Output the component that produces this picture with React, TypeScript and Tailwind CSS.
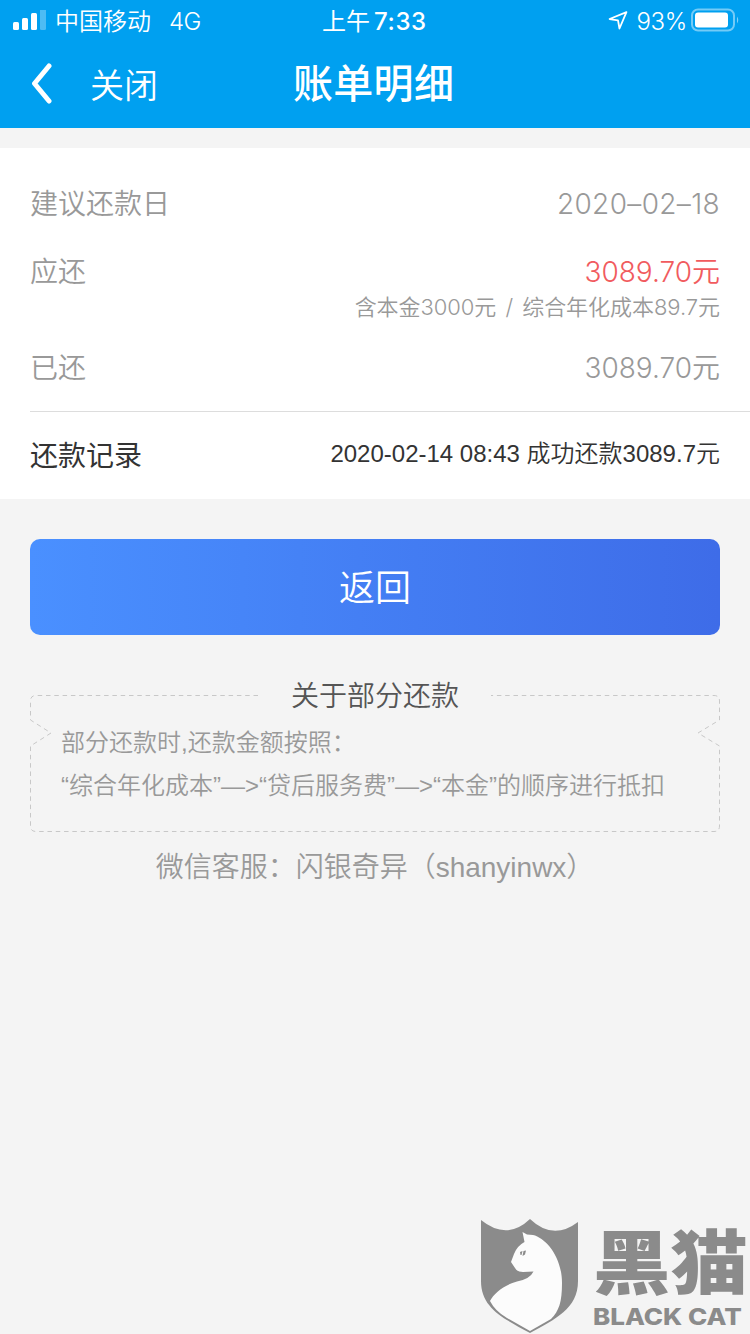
const rowText = "font-['Inter','Noto_Sans_CJK_SC',sans-serif] font-[350] text-[28px] leading-10 text-[#999]"

function StatusBar() {
  return (
    <div className="flex h-10 items-center text-2xl leading-10 font-['Inter','Noto_Sans_CJK_SC',sans-serif]">
      <div className="flex w-[322px] items-center pl-[13px] font-[350]">
        <svg width="34" height="20" viewBox="0 0 34 20" fill="currentColor">
          <rect x="0" y="12" width="6" height="8" rx="1.5" />
          <rect x="9" y="8" width="6" height="12" rx="1.5" />
          <rect x="18" y="3" width="6" height="17" rx="1.5" />
          <rect x="27" y="-1" width="6" height="21" rx="1.5" opacity="0.3" />
        </svg>
        <span className="ml-2 pt-1">中国移动</span>
        <span className="ml-[18px] pt-1 tracking-[-0.5px]">4G</span>
      </div>
      <div className="pt-1 font-medium">
        <span className="font-normal">上午</span>
        <span className="ml-1 tracking-[0.6px]">7:33</span>
      </div>
      <div className="flex flex-1 items-center justify-end pr-[10px] font-[350]">
        <svg width="20" height="19" viewBox="0 0 18 18" fill="none" stroke="currentColor" strokeWidth="1.7" strokeLinejoin="round">
          <path d="M17 1 L1 7.6 L9 8.8 L10.4 16.6 Z" />
        </svg>
        <span className="ml-2 pt-1 tracking-[-0.3px]">93%</span>
        <svg className="ml-1" width="49" height="24" viewBox="0 0 49 24">
          <rect x="1" y="1.5" width="42" height="21" rx="6" fill="none" stroke="currentColor" strokeWidth="2" opacity="0.45" />
          <rect x="4" y="4.5" width="33" height="15" rx="3" fill="currentColor" />
          <path d="M46 8.5 Q48.5 12 46 15.5 Z" fill="currentColor" opacity="0.5" />
        </svg>
      </div>
    </div>
  )
}

function NavBar() {
  return (
    <div className="flex h-[88px] items-center">
      <div className="flex w-[293px] items-center pl-[30px]">
        <svg width="24" height="42" viewBox="0 0 24 42" fill="none" stroke="currentColor" strokeWidth="5" strokeLinecap="round" strokeLinejoin="round">
          <path d="M19 3 L4.5 20.5 L19 38" />
        </svg>
        <span className="ml-9 pt-1 text-[34px] leading-[48px] font-[350]">关闭</span>
      </div>
      <h1 className="text-[40px] leading-[56px] font-medium tracking-[0.3px]">账单明细</h1>
    </div>
  )
}

function BillCard() {
  return (
    <section className="h-[351px] bg-white pl-[30px]">
      <div className={`flex justify-between pt-9 pr-[30px] ${rowText}`}>
        <span>建议还款日</span>
        <span className="tracking-[0.35px]">2020–02–18</span>
      </div>
      <div className={`flex justify-between pt-7 pr-[30px] ${rowText}`}>
        <span>应还</span>
        <div className="text-right">
          <div className="text-[#f15b5e]">3089.70元</div>
          <div className="text-[22px] leading-[30px] tracking-[-0.05px] [word-spacing:3px]">含本金3000元 / 综合年化成本89.7元</div>
        </div>
      </div>
      <div className={`flex justify-between pt-[26px] pr-[30px] ${rowText}`}>
        <span>已还</span>
        <span>3089.70元</span>
      </div>
      <div className="mt-[23px] flex h-[88px] items-center justify-between border-t border-[#ddd] pr-[30px] text-[#333]">
        <span className="pt-0.5 text-[28px] leading-10">还款记录</span>
        <span className="pb-1 text-2xl font-[350]">2020-02-14 08:43 成功还款3089.7元</span>
      </div>
    </section>
  )
}

function Notice() {
  return (
    <section className="relative mx-[30px] mt-[39px] h-[158px] text-[#999]">
      {/* ticket outline */}
      <svg className="absolute top-[21px] left-0" width="690" height="138" viewBox="0 0 690 138" fill="none" stroke="#c8c8c8" strokeDasharray="4.5 3.8">
        <path d="M228 0.5 H6 Q0.5 0.5 0.5 6 V25 L21 38 L0.5 51 V131 Q0.5 136.5 6 136.5 H684 Q689.5 136.5 689.5 131 V51 L668 38 L689.5 25 V6 Q689.5 0.5 684 0.5 H461" />
      </svg>
      <h2 className="pt-[3px] text-center text-[28px] leading-10 font-[350] text-[#555]">关于部分还款</h2>
      <div className="pt-1 pl-[31px] text-2xl leading-[43px] font-[350]">
        <p>部分还款时,还款金额按照：</p>
        <p>“综合年化成本”—&gt;“贷后服务费”—&gt;“本金”的顺序进行抵扣</p>
      </div>
    </section>
  )
}

function Watermark() {
  return (
    <div className="absolute right-0 bottom-0 flex h-[116px] w-[270px] text-[#8b8b8b]">
      <svg className="shrink-0" width="100" height="116" viewBox="0 0 100 116">
        <path d="M1 2 Q27 23 50 1 Q73 23 98 4 V63 C98 91 75 101 50 115 C25 101 1 91 1 63 Z" fill="currentColor" />
        <path d="M42.5 14 L47 16.5 L53 17 C66 20 82 39 82 65 C82 84 79 93 71 101 L50 113 L27 100 Q15 93 10 83 C14 75 24 67 37 63.5 Q50 61 53.5 53.5 L43 54 Q37 54 35 50 L31 44 L34 36 Q37 28 44.5 24 Z" fill="#fcfcfc" />
        <path d="M40 34 L42.5 33 L41.5 37 L40.5 37 Z M43.5 33 L46 32.5 L45 36.5 L42.5 38 Z" fill="currentColor" />
      </svg>
      <div className="ml-[13px] flex w-[157px] flex-col pt-2.5">
        <span className="h-[74px] origin-left scale-x-[1.02] scale-y-[0.92] text-[76px] leading-[74px] font-black whitespace-nowrap">黑猫</span>
        <span className="mt-[3px] w-max origin-left scale-x-[1.13] font-['Inter',sans-serif] text-[23px] leading-6 font-extrabold whitespace-nowrap">BLACK CAT</span>
      </div>
    </div>
  )
}

export default function App() {
  return (
    <main className="relative h-[1334px] w-[750px] overflow-hidden bg-[#f4f4f4] font-['Liberation_Sans','Noto_Sans_CJK_SC',sans-serif]">
      <header className="mb-5 bg-[#00a0f0] text-white">
        <StatusBar />
        <NavBar />
      </header>

      <BillCard />

      <div className="px-[30px] pt-10">
        <button className="h-24 w-full rounded-[10px] bg-linear-to-r from-[#4a90ff] to-[#3e6ce8] pt-1 text-4xl font-[350] text-white">
          返回
        </button>
      </div>

      <Notice />

      <p className="mt-4 text-center text-[28px] leading-10 font-[350] text-[#999]">
        微信客服：闪银奇异（shanyinwx）
      </p>

      <Watermark />
    </main>
  )
}
